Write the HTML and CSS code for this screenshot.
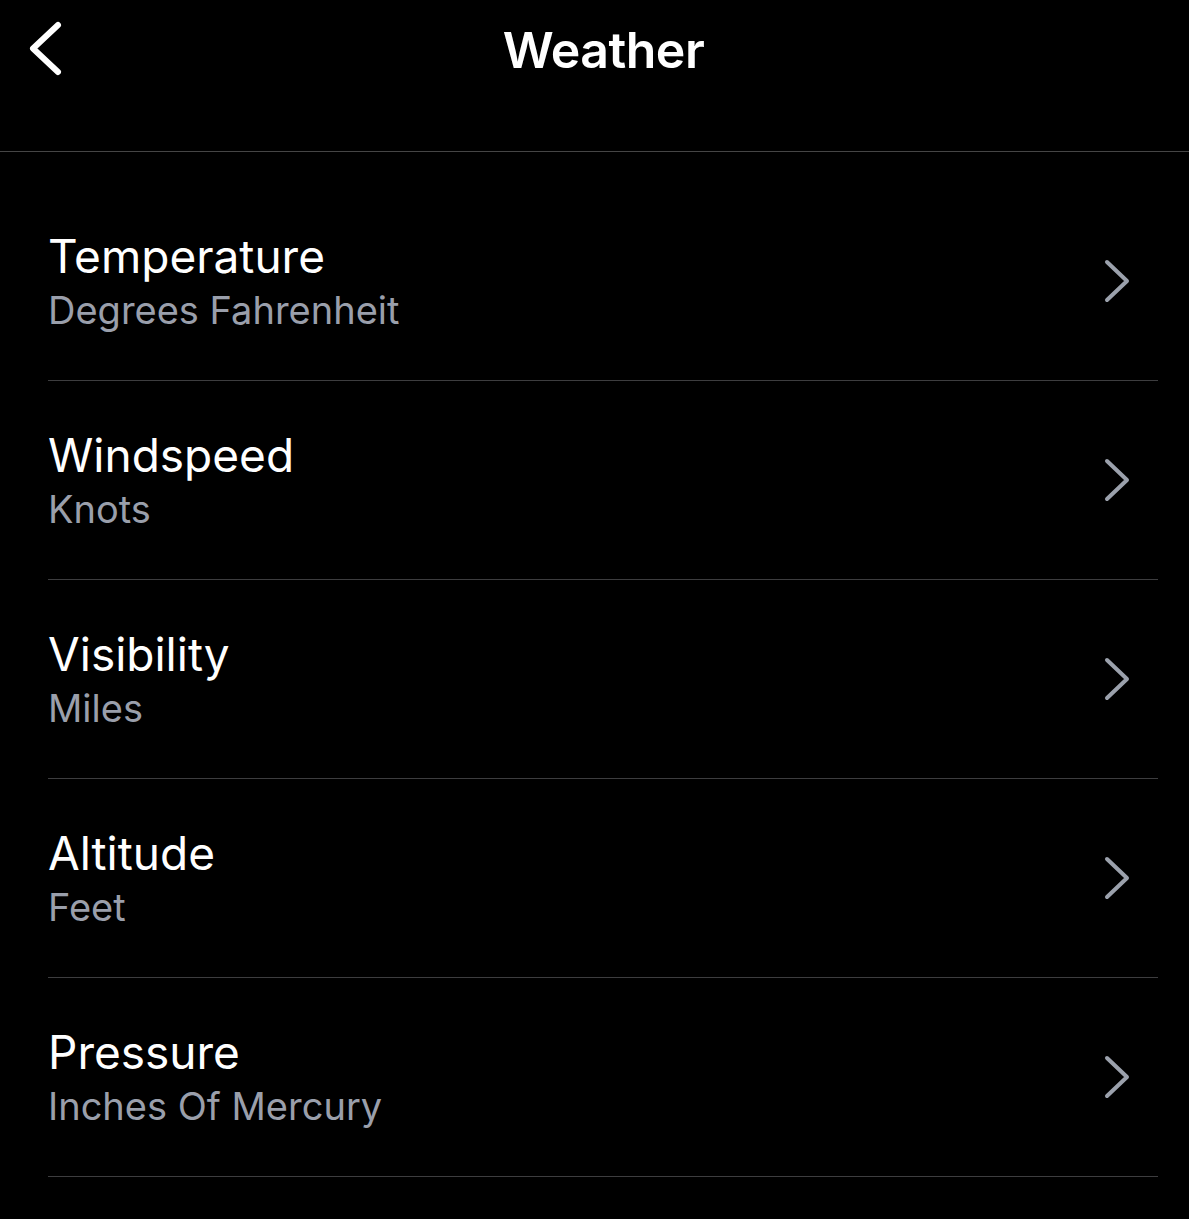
FILE: index.html
```html
<!DOCTYPE html>
<html lang="en">
<head>
    <meta charset="UTF-8">
    <meta name="viewport" content="width=device-width, initial-scale=1.0">
    <title>Weather</title>
    <link rel="stylesheet" href="styles.css">
</head>
<body>
    <header class="nav-bar">
        <button class="back-btn" aria-label="Back">
            <svg width="80" height="90" viewBox="0 0 80 90">
                <path d="M58 25 L33 48.5 L58 72" fill="none" stroke="#fff" stroke-width="6" stroke-linecap="round" stroke-linejoin="round"/>
            </svg>
        </button>
        <h1 class="nav-title">Weather</h1>
    </header>

    <ul class="settings-list">
        <li class="settings-row">
            <div class="row-text">
                <div class="row-title">Temperature</div>
                <div class="row-value">Degrees Fahrenheit</div>
            </div>
            <svg class="chevron" width="30" height="46" viewBox="0 0 30 46">
                <path d="M5 4 L25 23 L5 42" fill="none" stroke="#9ba1ac" stroke-width="4" stroke-linecap="round" stroke-linejoin="round"/>
            </svg>
        </li>
        <li class="settings-row">
            <div class="row-text">
                <div class="row-title">Windspeed</div>
                <div class="row-value">Knots</div>
            </div>
            <svg class="chevron" width="30" height="46" viewBox="0 0 30 46">
                <path d="M5 4 L25 23 L5 42" fill="none" stroke="#9ba1ac" stroke-width="4" stroke-linecap="round" stroke-linejoin="round"/>
            </svg>
        </li>
        <li class="settings-row">
            <div class="row-text">
                <div class="row-title">Visibility</div>
                <div class="row-value">Miles</div>
            </div>
            <svg class="chevron" width="30" height="46" viewBox="0 0 30 46">
                <path d="M5 4 L25 23 L5 42" fill="none" stroke="#9ba1ac" stroke-width="4" stroke-linecap="round" stroke-linejoin="round"/>
            </svg>
        </li>
        <li class="settings-row">
            <div class="row-text">
                <div class="row-title">Altitude</div>
                <div class="row-value">Feet</div>
            </div>
            <svg class="chevron" width="30" height="46" viewBox="0 0 30 46">
                <path d="M5 4 L25 23 L5 42" fill="none" stroke="#9ba1ac" stroke-width="4" stroke-linecap="round" stroke-linejoin="round"/>
            </svg>
        </li>
        <li class="settings-row">
            <div class="row-text">
                <div class="row-title">Pressure</div>
                <div class="row-value">Inches Of Mercury</div>
            </div>
            <svg class="chevron" width="30" height="46" viewBox="0 0 30 46">
                <path d="M5 4 L25 23 L5 42" fill="none" stroke="#9ba1ac" stroke-width="4" stroke-linecap="round" stroke-linejoin="round"/>
            </svg>
        </li>
    </ul>
</body>
</html>
```

FILE: styles.css
```css
body {
    font-family: 'Inter', 'Noto Sans', sans-serif;
    background-color: #000;
    color: #fff;
    margin: 0;
}
.nav-bar {
    position: relative;
    height: 151px;
    border-bottom: 1px solid #454545;
    box-sizing: content-box;
}
.back-btn {
    position: absolute;
    left: 0;
    top: 0;
    background: none;
    border: none;
    padding: 0;
    cursor: pointer;
}
.back-btn svg {
    display: block;
}
.nav-title {
    margin: 0;
    padding-top: 20px;
    padding-left: 18px;
    text-align: center;
    font-size: 50px;
    font-weight: 600;
    line-height: 60px;
    letter-spacing: -0.5px;
}
.settings-list {
    list-style: none;
    margin: 0;
    padding: 30px 31px 0 48px;
}
.settings-row {
    display: flex;
    align-items: center;
    justify-content: space-between;
    height: 198px;
    border-bottom: 1px solid #3d3d3f;
}
.row-text {
    display: flex;
    flex-direction: column;
}
.row-title {
    font-size: 46px;
    line-height: 58px;
    color: #fff;
}
.row-value {
    font-size: 38px;
    line-height: 50px;
    color: #9a9fab;
}
.chevron {
    display: block;
    margin-right: 26px;
}
```
